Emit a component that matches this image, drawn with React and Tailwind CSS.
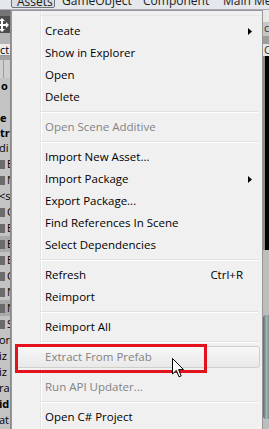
import React from "react";

const menuItems = [
  { t: "Create", sub: true },
  { t: "Show in Explorer" },
  { t: "Open" },
  { t: "Delete" },
  "sep",
  { t: "Open Scene Additive", dis: true },
  "sep",
  { t: "Import New Asset..." },
  { t: "Import Package", sub: true },
  { t: "Export Package..." },
  { t: "Find References In Scene" },
  { t: "Select Dependencies" },
  "sep",
  { t: "Refresh", key: "Ctrl+R" },
  { t: "Reimport" },
  "sep",
  { t: "Reimport All" },
  "sep",
  { t: "Extract From Prefab", dis: true, hover: true },
  "gap",
  { t: "Run API Updater...", dis: true },
  "sep",
  { t: "Open C# Project" },
];

// rows of the editor panel peeking out on the left
const leftRows = [
  { h: 16, t: "di" },
  { h: 16, t: "E", icon: true },
  { h: 16, t: "N", icon: true },
  { h: 16, t: "<s" },
  { h: 16, t: "C", icon: true },
  { h: 16, t: "E", icon: true },
  { h: 16, t: "E", icon: true, sel: true },
  { h: 16, t: "E", icon: true },
  { h: 16, t: "C", icon: true },
  { h: 16, t: "N", icon: true },
  { h: 16, t: "N", icon: true, sel: true },
  { h: 16, t: "S", icon: true },
  { h: 16, t: "or" },
  { h: 16, t: "iz" },
  { h: 16, t: "iz" },
  { h: 16, t: "ra" },
  { h: 16, t: "id", bold: true },
  { h: 16, t: "at" },
];

const MenuBar = () => (
  <div className="h-[10px] flex bg-[#e4e7eb] border-b border-[#a9adb3] overflow-hidden text-[12px] leading-[14px] text-[#1b1b1b]">
    <div className="w-[11px] shrink-0" />
    <div className="w-[44px] shrink-0 h-[14px] -mt-[6px] border border-[#6f7378] rounded-[2px] bg-[#dadde1] pl-[5px]">
      Assets
    </div>
    <div className="w-[88px] shrink-0 -mt-[6px] pl-[7px]">GameObject</div>
    <div className="w-[80px] shrink-0 -mt-[6px]">Component</div>
    <div className="shrink-0 -mt-[6px] whitespace-nowrap">Main Menu</div>
  </div>
);

const LeftStrip = () => (
  <div className="w-[11px] shrink-0 flex flex-col bg-[#c3c3c3] text-[11px] leading-[16px] text-black overflow-hidden border-r border-[#8a8a8a]">
    <div className="h-[6px] bg-[#747474]" />
    <div className="h-[17px] bg-[#4d4d4d] flex items-center">
      <svg width="16" height="14" viewBox="0 0 16 14" className="-ml-[6px] shrink-0">
        <path d="M8 0 L11 3 L9 3 L9 6 L12 6 L12 4 L15 7 L12 10 L12 8 L9 8 L9 11 L11 11 L8 14 L5 11 L7 11 L7 8 L4 8 L4 10 L1 7 L4 4 L4 6 L7 6 L7 3 L5 3 Z" fill="#ffffff" />
      </svg>
    </div>
    <div className="h-[11px] bg-[#b5b5b5]" />
    <div className="h-[12px] bg-[#ececec] border-b border-[#9a9a9a] flex items-center leading-[12px]">ct</div>
    <div className="h-[4px] bg-[#a3a3a3]" />
    <div className="h-[18px] bg-[#cfcfcf] flex">
      <div className="w-[3px]" />
      <div className="w-px bg-[#9d9d9d]" />
    </div>
    <div className="h-[16px] font-bold pl-px">o</div>
    <div className="h-[16px]" />
    <div className="h-[16px] font-bold">e</div>
    <div className="h-[14px] font-bold leading-[14px]">tr</div>
    {leftRows.map((r, i) => (
      <div
        key={i}
        className={`shrink-0 h-[16px] flex items-center whitespace-nowrap ${r.sel ? "bg-[#a9a9a9]" : ""} ${r.bold ? "font-bold" : ""}`}
      >
        {r.icon && <span className="w-[5px] h-[9px] bg-[#6b6b6b] mr-[2px] shrink-0" />}
        <span className={r.icon ? "" : "-ml-px"}>{r.t}</span>
      </div>
    ))}
  </div>
);

const RightStrip = () => (
  <div className="w-[6px] shrink-0 flex flex-col bg-[#c0c0c0] text-[11px] leading-[12px] text-[#333] overflow-hidden">
    <div className="h-[12px] bg-[#e9e9e9]" />
    <div className="h-[14px] bg-[#c6c6c6] pl-px">c</div>
    <div className="h-[8px] bg-[#9d9d9d]" />
    <div className="h-[12px] bg-[#e6e6e6] pl-px">C</div>
    <div className="h-[194px] bg-black border-l-2 border-[#8d8d8d]" />
    <div className="h-[65px] bg-[#bdbdbd]" />
    <div className="h-[104px] bg-[linear-gradient(to_right,#5c6b6b,#a7b7b5_60%,#7e8e8c)] rounded-l-[3px]" />
    <div className="flex-1 bg-[#bdbdbd]" />
  </div>
);

const Separator = () => (
  <div className="h-[8px] flex items-center ml-[28px] mr-[4px]">
    <div className="w-full h-[2px] border-t border-[#e0e0e0] border-b border-b-white" />
  </div>
);

const Item = ({ item }) => {
  const color = item.dis ? "text-[#838383]" : "text-black";
  if (item.hover) {
    return (
      <div className="h-[22px] ml-[3px] mr-[2px] rounded-[3px] border border-[#cfcfcf] bg-[linear-gradient(#f7f7f7,#e9e9e9)] flex items-center pl-[29px]">
        <span className={color}>{item.t}</span>
      </div>
    );
  }
  return (
    <div className={`h-[22px] flex items-center pl-[33px] ${color}`}>
      <span className="whitespace-nowrap">{item.t}</span>
      {item.key && <span className="ml-auto mr-[19px]">{item.key}</span>}
      {item.sub && (
        <svg width="4" height="7" viewBox="0 0 4 7" className="ml-auto mr-[10px]">
          <path d="M0 0 L4 3.5 L0 7 Z" fill="#000" />
        </svg>
      )}
    </div>
  );
};

const Menu = () => (
  <div className="w-[252px] shrink-0 border-l border-r border-t border-[#979797] bg-[#f0f0f0] bg-[linear-gradient(to_right,#f1f1f1_28px,#e2e3e3_28px,#e2e3e3_29px,#ffffff_29px,#ffffff_30px,#f0f0f0_30px)] text-[11.5px] font-['Open_Sans',sans-serif]">
    <div className="h-[9px] flex flex-col">
      <div className="h-[4px]" />
      <div className="h-px ml-[28px] mr-[2px] bg-[#e6e6e6]" />
    </div>
    {menuItems.map((it, i) =>
      it === "sep" ? (
        <Separator key={i} />
      ) : it === "gap" ? (
        <div key={i} className="h-[8px]" />
      ) : (
        <Item key={i} item={it} />
      )
    )}
  </div>
);

export default function App() {
  return (
    <div className="relative w-[269px] h-[429px] overflow-hidden bg-[#c3c3c3] font-['Open_Sans',sans-serif]">
      <MenuBar />
      <div className="flex h-[419px]">
        <LeftStrip />
        <Menu />
        <RightStrip />
      </div>

      {/* red annotation box */}
      <div className="absolute left-[15px] top-[344px] w-[192px] h-[29px] border-[3px] border-[#e3121c]" />

      {/* mouse cursor */}
      <svg className="absolute left-[172px] top-[358px]" width="13" height="20" viewBox="0 0 13 20">
        <path d="M0.5 0.5 L0.5 16 L4.3 12.4 L7 18.8 L9.2 17.9 L6.6 11.6 L11.5 11.6 Z" fill="#ffffff" stroke="#000" strokeWidth="1" strokeLinejoin="round" />
      </svg>
    </div>
  );
}
